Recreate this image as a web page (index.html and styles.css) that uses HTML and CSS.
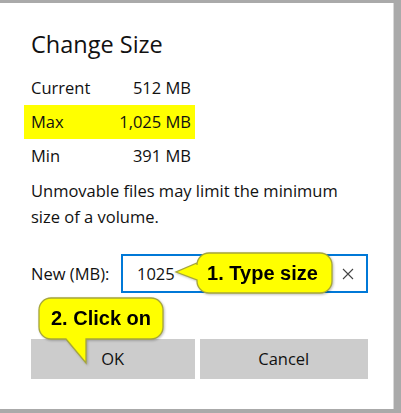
FILE: index.html
```html
<!DOCTYPE html>
<html>
<head>
<meta charset="utf-8">
<link rel="stylesheet" href="styles.css">
</head>
<body>
<div class="dialog">
  <h1 class="title">Change Size</h1>
  <div class="stats">
    <div class="row"><span>Current</span><span>512 MB</span></div>
    <div class="row hl"><span>Max</span><span>1,025 MB</span></div>
    <div class="row"><span>Min</span><span>391 MB</span></div>
  </div>
  <p class="note">Unmovable files may limit the minimum size of a volume.</p>
  <div class="field">
    <span class="label">New (MB):</span>
    <div class="input">
      <span class="value">1025</span>
      <svg class="clear" width="12" height="12" viewBox="0 0 12 12"><path d="M1 1L11 11M11 1L1 11" stroke="#444" stroke-width="1.1" fill="none"/></svg>
    </div>
  </div>
  <div class="buttons">
    <div class="btn ok">OK</div>
    <div class="btn cancel">Cancel</div>
  </div>

  <div class="callout c1">
    <svg width="170" height="52" viewBox="0 0 170 52">
      <path d="M39 5 H150 A12 12 0 0 1 162 17 V33 A12 12 0 0 1 150 45 H39 A12 12 0 0 1 27 33 V32 L6 24 L27 15 V17 A12 12 0 0 1 39 5 Z" fill="#ffff00" stroke="#a6a63a" stroke-width="1.3"/>
    </svg>
    <span class="ctext t1">1. Type size</span>
  </div>

  <div class="callout c2">
    <svg width="140" height="75" viewBox="0 0 140 75">
      <path d="M21 5 H121 A12 12 0 0 1 133 17 V34 A12 12 0 0 1 121 46 H56 L56 70 L36 46 H21 A12 12 0 0 1 9 34 V17 A12 12 0 0 1 21 5 Z" fill="#ffff00" stroke="#a6a63a" stroke-width="1.3"/>
    </svg>
    <span class="ctext t2">2. Click on</span>
  </div>
</div>
</body>
</html>
```

FILE: styles.css
```css
html, body {
  margin: 0;
  padding: 0;
}
body {
  background: #aaaaaa;
  width: 401px;
  height: 413px;
  overflow: hidden;
  font-family: "Open Sans", "Noto Sans", sans-serif;
  color: #111;
}
.dialog {
  position: relative;
  margin-top: 3px;
  width: 394px;
  height: 406px;
  box-sizing: border-box;
  background: #fff;
  padding: 26px 25px 0 31px;
  border-right: 1px solid #d8d8d8;
}
.title {
  margin: 0;
  font-weight: 400;
  font-size: 23.5px;
  line-height: 30px;
  height: 30px;
}
.stats {
  margin-top: 12px;
  width: 160px;
}
.row {
  display: flex;
  justify-content: space-between;
  height: 34px;
  font-size: 16.5px;
  line-height: 34px;
}
.row.hl {
  background: #ffff00;
  margin-left: -7px;
  margin-right: -4px;
  padding: 0 4px 0 7px;
}
.note {
  margin: 4.5px 0 0 0;
  font-size: 16.5px;
  line-height: 26px;
  width: 320px;
}
.field {
  margin-top: 24.5px;
  display: flex;
  align-items: center;
  height: 39px;
  font-size: 16.5px;
}
.label {
  width: 90px;
  flex: none;
}
.input {
  flex: none;
  width: 247px;
  height: 39px;
  box-sizing: border-box;
  border: 2px solid #0078d7;
  display: flex;
  align-items: center;
  justify-content: space-between;
  padding: 0 12px 0 14px;
}
.value {
  line-height: 20px;
}
.clear {
  display: block;
}
.buttons {
  margin-top: 46px;
  display: flex;
  gap: 5px;
}
.btn {
  height: 40px;
  background: #cccccc;
  font-size: 16.5px;
  line-height: 40px;
  text-align: center;
}
.ok { width: 164px; }
.cancel { width: 169px; }

.callout {
  position: absolute;
  filter: drop-shadow(1px 1px 1px rgba(0,0,0,0.25));
}
.callout svg {
  display: block;
}
.c1 {
  left: 170px;
  top: 245px;
  width: 170px;
  height: 52px;
}
.c2 {
  left: 30px;
  top: 290px;
  width: 140px;
  height: 75px;
}
.ctext {
  position: absolute;
  font-family: "Liberation Sans", Arial, sans-serif;
  font-weight: 700;
  font-size: 20px;
  color: #000;
  text-align: center;
  white-space: nowrap;
}
.t1 {
  left: 25px;
  width: 135px;
  top: 5px;
  line-height: 40px;
}
.t2 {
  left: 9px;
  width: 124px;
  top: 5px;
  line-height: 41px;
}
```
